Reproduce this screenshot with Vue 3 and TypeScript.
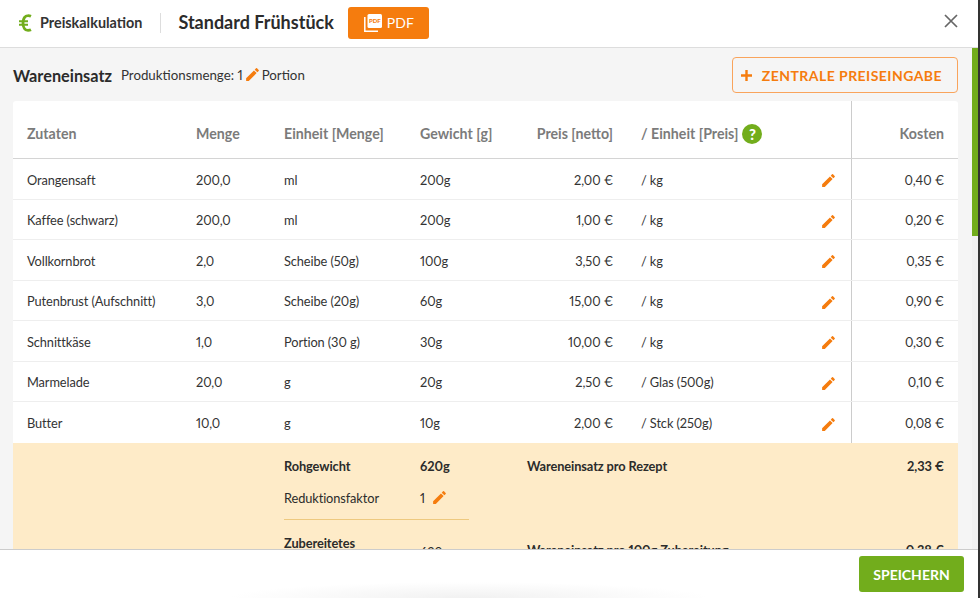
<template>
  <main class="modal">
    <header class="top-bar">
      <svg class="euro-icon" viewBox="0 0 14 20" width="14" height="20">
        <path d="M13 3.200A7 7 0 0 0 10 2.600C7 2.600 5 5.600 5 10s2 7.400 5 7.400c1.200 0 2.200-.2 3-.6" fill="none" stroke="#72ad1c" stroke-width="2.800" />
        <path d="M1 8.300h9M1 11.700h9" stroke="#72ad1c" stroke-width="2" />
      </svg>
      <span class="module-name">Preiskalkulation</span>
      <span class="divider"></span>
      <h1>Standard Frühstück</h1>
      <button class="pdf-button">
        <svg viewBox="0 0 18 18" width="18" height="18">
          <path d="M.8 3v14.200H14" fill="none" stroke="#fff" stroke-width="1.500" />
          <rect x="3.500" y="0" width="14.500" height="14" rx="1.500" fill="#fff" />
          <text x="10.750" y="9" text-anchor="middle" class="pdf-mini">PDF</text>
        </svg>
        PDF
      </button>
      <button class="close-button" aria-label="Schließen">
        <svg viewBox="0 0 14 14" width="14" height="14">
          <path d="M1 1l12 12M13 1L1 13" stroke="#666" stroke-width="1.700" />
        </svg>
      </button>
    </header>

    <div class="scroll-area">
      <div class="title-row">
        <h2>Wareneinsatz</h2>
        <span class="amount">Produktionsmenge: 1</span>
        <svg class="pencil small" viewBox="0 0 24 24"><path :d="pencilPath" /></svg>
        <span class="amount">Portion</span>
        <button class="price-button">
          <svg viewBox="0 0 11 11" width="11" height="11"><path d="M5.500 0v11M0 5.500h11" stroke="#f57c0e" stroke-width="2.400" /></svg>
          ZENTRALE PREISEINGABE
        </button>
      </div>

      <section class="card">
        <div class="row head">
          <div>Zutaten</div>
          <div>Menge</div>
          <div>Einheit [Menge]</div>
          <div>Gewicht [g]</div>
          <div class="right">Preis [netto]</div>
          <div class="unit">/ Einheit [Preis] <span class="help">?</span></div>
          <div></div>
          <div class="right cost">Kosten</div>
        </div>

        <div v-for="item in items" :key="item.name" class="row">
          <div>{{ item.name }}</div>
          <div>{{ item.amount }}</div>
          <div>{{ item.unit }}</div>
          <div>{{ item.weight }}</div>
          <div class="right">{{ item.price }}</div>
          <div class="unit">{{ item.priceUnit }}</div>
          <div class="edit"><svg class="pencil" viewBox="0 0 24 24"><path :d="pencilPath" /></svg></div>
          <div class="right cost">{{ item.cost }}</div>
        </div>

        <div class="summary">
          <div class="weights">
            <div class="line"><b>Rohgewicht</b><b>620g</b></div>
            <div class="line factor">
              <span>Reduktionsfaktor</span>
              <span class="factor-value">1 <svg class="pencil" viewBox="0 0 24 24"><path :d="pencilPath" /></svg></span>
            </div>
            <div class="line prepared"><b>Zubereitetes<br />Gewicht</b><span>620g</span></div>
          </div>
          <div class="totals">
            <div class="line"><b>Wareneinsatz pro Rezept</b><b>2,33 €</b></div>
            <div class="line per-100"><b>Wareneinsatz pro 100g Zubereitung</b><b>0,38 €</b></div>
          </div>
        </div>
      </section>
      <div class="scroll-track"><div class="scroll-thumb"></div></div>
    </div>

    <footer class="bottom-bar">
      <button class="save-button">SPEICHERN</button>
    </footer>
  </main>
</template>

<script setup lang="ts">
type Item = {
  name: string
  amount: string
  unit: string
  weight: string
  price: string
  priceUnit: string
  cost: string
}

const pencilPath = 'M3 17.250V21h3.750L17.810 9.940l-3.750-3.750L3 17.250zM20.710 7.040a1 1 0 0 0 0-1.410l-2.340-2.340a1 1 0 0 0-1.410 0l-1.830 1.830 3.750 3.750 1.830-1.830z'

const items: Item[] = [
  { name: 'Orangensaft', amount: '200,0', unit: 'ml', weight: '200g', price: '2,00 €', priceUnit: '/ kg', cost: '0,40 €' },
  { name: 'Kaffee (schwarz)', amount: '200,0', unit: 'ml', weight: '200g', price: '1,00 €', priceUnit: '/ kg', cost: '0,20 €' },
  { name: 'Vollkornbrot', amount: '2,0', unit: 'Scheibe (50g)', weight: '100g', price: '3,50 €', priceUnit: '/ kg', cost: '0,35 €' },
  { name: 'Putenbrust (Aufschnitt)', amount: '3,0', unit: 'Scheibe (20g)', weight: '60g', price: '15,00 €', priceUnit: '/ kg', cost: '0,90 €' },
  { name: 'Schnittkäse', amount: '1,0', unit: 'Portion (30 g)', weight: '30g', price: '10,00 €', priceUnit: '/ kg', cost: '0,30 €' },
  { name: 'Marmelade', amount: '20,0', unit: 'g', weight: '20g', price: '2,50 €', priceUnit: '/ Glas (500g)', cost: '0,10 €' },
  { name: 'Butter', amount: '10,0', unit: 'g', weight: '10g', price: '2,00 €', priceUnit: '/ Stck (250g)', cost: '0,08 €' }
]
</script>

<style>
html,
body {
  margin: 0;
  overflow: hidden;
}
</style>

<style scoped>
.modal {
  display: flex;
  flex-direction: column;
  box-sizing: border-box;
  width: 980px;
  height: 598px;
  border-right: 2px solid #333;
  background: #fff;
  color: #333;
  font-family: Lato, "Liberation Sans", sans-serif;
  font-size: 12.800px;
  font-variant-numeric: proportional-nums;
}

button {
  font-family: inherit;
  cursor: pointer;
}

.top-bar {
  display: flex;
  flex: none;
  align-items: center;
  box-sizing: border-box;
  height: 48px;
  padding: 0 20px 2px 18px;
  border-bottom: 1px solid #ddd;
  background: #fff;
}

.euro-icon {
  margin-right: 8px;
}

.module-name {
  font-size: 14.400px;
  font-weight: 700;
  color: #333;
}

.divider {
  width: 1px;
  height: 20px;
  margin: 0 17px 0 18px;
  background: #ddd;
}

h1 {
  margin: 0 14px 2px 0;
  font-size: 18px;
  font-weight: 700;
  color: #2b2b2b;
}

.pdf-button {
  display: flex;
  align-items: center;
  gap: 5px;
  height: 32px;
  padding: 0 15px 0 16px;
  border: none;
  border-radius: 3px;
  background: #f57c0e;
  color: #fff;
  font-size: 14px;
  font-weight: 400;
}

.pdf-mini {
  fill: #f57c0e;
  font-size: 6px;
  font-weight: 900;
}

.close-button {
  display: flex;
  margin: 0 0 3px auto;
  padding: 0;
  border: none;
  background: none;
}

.scroll-area {
  position: relative;
  flex: 1;
  min-height: 0;
  overflow: hidden;
  padding: 9px 20px 0 13px;
  background: #f5f5f5;
}

.title-row {
  display: flex;
  align-items: center;
  height: 36px;
  margin-bottom: 8px;
}

h2 {
  margin: 0 9px 0 0;
  font-size: 16.300px;
  font-weight: 700;
  color: #2b2b2b;
}

.amount {
  font-size: 13.300px;
}

.pencil {
  width: 17px;
  height: 17px;
  fill: #f57c0e;
}

.pencil.small {
  margin: 0 1px 2px 1px;
}

.price-button {
  display: flex;
  align-items: center;
  gap: 10px;
  margin-left: auto;
  box-sizing: border-box;
  height: 36px;
  padding: 0 15px 0 8px;
  border: 1px solid #f9a45c;
  border-radius: 4px;
  background: transparent;
  color: #f57c0e;
  font-size: 14px;
  font-weight: 700;
  letter-spacing: 0.45px;
}

.card {
  border-radius: 3px 3px 0 0;
  background: #fff;
}

.row {
  display: grid;
  grid-template-columns: 169px 88px 136px 100px 93px 204px 22px 1fr;
  box-sizing: border-box;
  align-items: center;
  height: 40.500px;
  padding-left: 14px;
  border-bottom: 1px solid #eee;
  letter-spacing: -0.1px;
}

.row:nth-last-child(2) {
  border-bottom: none;
}

.row.head {
  height: 58px;
  border-bottom: 1px solid #d4d4d4;
  color: #7b7b7b;
  font-size: 14.200px;
  font-weight: 700;
  letter-spacing: 0;
}

.row > div {
  display: flex;
  align-items: center;
  box-sizing: border-box;
  height: 100%;
  padding-top: 2px;
}

.row.head > div {
  padding-top: 8px;
}

.right {
  justify-content: flex-end;
}

.unit {
  padding-left: 28px;
}

.row.head .unit {
  gap: 4px;
  white-space: nowrap;
}

.help {
  display: inline-flex;
  flex: none;
  align-items: center;
  justify-content: center;
  width: 20px;
  height: 20px;
  border-radius: 50%;
  background: #72ad1c;
  color: #fff;
  font-size: 15px;
  font-weight: 900;
}

.edit {
  justify-content: center;
}

.edit .pencil {
  margin-top: 2px;
}

.row > .cost {
  margin-left: 12px;
  padding-right: 14px;
  border-left: 1px solid #ccc;
}

.summary {
  display: flex;
  box-sizing: border-box;
  height: 200px;
  padding: 14px 14px 0 271px;
  background: #feebc8;
  letter-spacing: -0.1px;
}

.weights {
  flex: none;
  width: 185px;
}

.totals {
  flex: 1;
  margin-left: 58px;
}

.line {
  display: flex;
  justify-content: space-between;
  align-items: center;
  line-height: 18px;
  color: #2b2b2b;
}

.weights .line > :last-child {
  width: 49px;
}

.factor {
  margin-top: 14px;
  padding-bottom: 12px;
  border-bottom: 1px solid #eec97f;
}

.factor-value {
  display: flex;
  align-items: center;
  gap: 6px;
}

.prepared {
  margin-top: 14px;
}

.per-100 {
  margin-top: 66px;
}

.scroll-track {
  position: absolute;
  top: 0;
  right: 0;
  bottom: 0;
  width: 6px;
  background: #f1f1f1;
}

.scroll-thumb {
  height: 188px;
  background: #72ad1c;
}

.bottom-bar {
  display: flex;
  flex: none;
  justify-content: flex-end;
  align-items: center;
  box-sizing: border-box;
  height: 49px;
  padding: 0 14px 0 0;
  border-top: 1px solid #ccc;
  background: radial-gradient(ellipse 240px 16px at 48% 100%, #f1f1f1, #fff);
}

.save-button {
  width: 105px;
  height: 36px;
  padding: 0;
  border: none;
  border-radius: 3px;
  background: #72ad1c;
  color: #fff;
  font-size: 14px;
  font-weight: 700;
}
</style>
